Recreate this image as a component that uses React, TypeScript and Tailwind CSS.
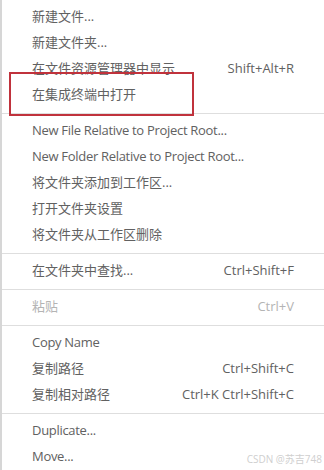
import React from 'react';

type Entry =
  | { kind: 'item'; label: string; shortcut?: string; disabled?: boolean }
  | { kind: 'sep' };

const entries: Entry[] = [
  { kind: 'item', label: '新建文件...' },
  { kind: 'item', label: '新建文件夹...' },
  { kind: 'item', label: '在文件资源管理器中显示', shortcut: 'Shift+Alt+R' },
  { kind: 'item', label: '在集成终端中打开' },
  { kind: 'sep' },
  { kind: 'item', label: 'New File Relative to Project Root...' },
  { kind: 'item', label: 'New Folder Relative to Project Root...' },
  { kind: 'item', label: '将文件夹添加到工作区...' },
  { kind: 'item', label: '打开文件夹设置' },
  { kind: 'item', label: '将文件夹从工作区删除' },
  { kind: 'sep' },
  { kind: 'item', label: '在文件夹中查找...', shortcut: 'Ctrl+Shift+F' },
  { kind: 'sep' },
  { kind: 'item', label: '粘贴', shortcut: 'Ctrl+V', disabled: true },
  { kind: 'sep' },
  { kind: 'item', label: 'Copy Name' },
  { kind: 'item', label: '复制路径', shortcut: 'Ctrl+Shift+C' },
  { kind: 'item', label: '复制相对路径', shortcut: 'Ctrl+K Ctrl+Shift+C' },
  { kind: 'sep' },
  { kind: 'item', label: 'Duplicate...' },
  { kind: 'item', label: 'Move...' },
];

// latin-only labels run a bit narrower in the original font
const isLatin = (s: string) => /^[\x20-\x7e]+$/.test(s);

export default function App() {
  return (
    <div
      className="relative w-[324px] h-[470px] overflow-hidden bg-white flex"
      style={{ fontFamily: '"Segoe UI", "Open Sans", "Noto Sans CJK SC", sans-serif' }}
    >
      {/* left edge of the window */}
      <div className="w-[2px] shrink-0 bg-[#d6d6d6]" />

      {/* menu */}
      <div className="flex-1 flex flex-col pt-[4px]">
        {entries.map((e, i) =>
          e.kind === 'sep' ? (
            <div key={i} className="h-[11px] pt-[5px]">
              <div className="h-px bg-[#dedede]" />
            </div>
          ) : (
            <div
              key={i}
              className={
                'h-[26px] shrink-0 flex items-center justify-between pl-[30px] pr-[30px] text-[13px] whitespace-nowrap ' +
                (e.disabled ? 'text-[#b4b4b4]' : 'text-[#616161]')
              }
            >
              <span className={isLatin(e.label) ? 'tracking-[-0.3px]' : ''}>{e.label}</span>
              {e.shortcut && <span>{e.shortcut}</span>}
            </div>
          )
        )}
      </div>

      {/* red annotation box */}
      <div className="absolute left-[9px] top-[72px] w-[185px] h-[44px] border-2 border-[#c0323c]" />

      {/* watermark */}
      <div className="absolute right-[2px] bottom-[6px] text-[10px] text-[#cfcfcf] leading-none">
        CSDN @苏吉748
      </div>
    </div>
  );
}
